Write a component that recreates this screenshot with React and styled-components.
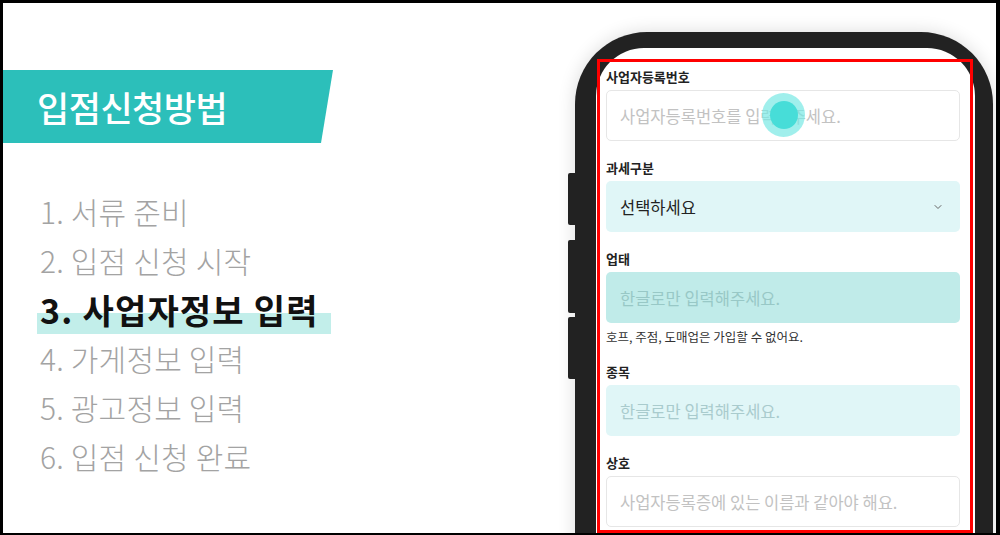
import styled, { createGlobalStyle } from "styled-components";
import { ChevronDown } from "lucide-react";

const GlobalStyle = createGlobalStyle`
  html, body {
    margin: 0;
    padding: 0;
    background: #fff;
  }
  body {
    font-family: "Noto Sans CJK KR", "Noto Sans", sans-serif;
  }
`;

const Frame = styled.div`
  box-sizing: border-box;
  width: 1000px;
  height: 535px;
  border-style: solid;
  border-color: #000;
  border-width: 3px 4px 2px 3px;
  background: #fff;
  overflow: hidden;
  display: flex;
`;

const Guide = styled.div`
  width: 572px;
  flex-shrink: 0;
  padding-top: 67px;
`;

const Banner = styled.div`
  width: 330px;
  height: 73px;
  background: #2cbfba;
  clip-path: polygon(0 0, 100% 0, calc(100% - 12px) 100%, 0 100%);
  display: flex;
  align-items: center;
  padding-left: 34px;
  box-sizing: border-box;
  color: #fff;
  font-size: 35px;
  font-weight: 500;
  letter-spacing: -0.5px;
`;

const Steps = styled.ol`
  list-style: none;
  margin: 44px 0 0;
  padding: 0 0 0 37px;
`;

const Step = styled.li`
  height: 49px;
  line-height: 49px;
  font-size: ${(p) => (p.$active ? "34px" : "30px")};
  font-weight: ${(p) => (p.$active ? 700 : 300)};
  color: ${(p) => (p.$active ? "#111" : "#a3a3a3")};
  letter-spacing: ${(p) => (p.$active ? "1.2px" : "0.2px")};
  white-space: nowrap;
`;

const Mark = styled.span`
  display: inline-block;
  margin-left: -3px;
  padding: 0 12px 0 3px;
  background: linear-gradient(transparent 58%, #c2eeea 58%);
`;

const Stage = styled.div`
  flex: 1;
  padding-top: 29px;
`;

const Phone = styled.div`
  position: relative;
  width: 418px;
  height: 600px;
  box-sizing: border-box;
  padding: 16px 18px 0 21px;
  background: #222;
  border-radius: 72px 72px 0 0;
  box-shadow: 0 0 18px rgba(0, 0, 0, 0.14);
`;

const SideKey = styled.span`
  position: absolute;
  left: -7px;
  top: ${(p) => p.$top}px;
  width: 8px;
  height: ${(p) => p.$h}px;
  background: #222;
  border-radius: 2px 0 0 2px;
`;

const Screen = styled.div`
  height: 100%;
  background: #fff;
  border-radius: 48px 48px 0 0;
  padding: 20px 15px 0 10px;
  box-sizing: border-box;
`;

const Highlight = styled.div`
  position: absolute;
  left: 22px;
  top: 27px;
  width: 376px;
  height: 474px;
  box-sizing: border-box;
  border: 3px solid #f00;
  pointer-events: none;
`;

const Field = styled.div`
  margin-bottom: 18px;
`;

const Label = styled.div`
  font-size: 13px;
  font-weight: 700;
  line-height: 18px;
  color: #222;
  margin-bottom: 4px;
`;

const Box = styled.div`
  position: relative;
  height: 51px;
  box-sizing: border-box;
  border-radius: 5px;
  border: 1px solid ${(p) => (p.$tone === "white" ? "#e6e6e6" : "transparent")};
  background: ${(p) =>
    p.$tone === "teal" ? "#c0ebe9" : p.$tone === "mint" ? "#e0f6f7" : "#fff"};
  display: flex;
  align-items: center;
  justify-content: space-between;
  padding: 0 15px 0 13px;
  font-size: 16.5px;
  color: ${(p) =>
    p.$value
      ? "#222"
      : p.$tone === "teal"
      ? "#98c8c6"
      : p.$tone === "mint"
      ? "#a9cbcd"
      : "#c2c2c2"};
  white-space: nowrap;
`;

const Hint = styled.div`
  margin-top: 6px;
  font-size: 12.5px;
  line-height: 16px;
  color: #333;
`;

const Touch = styled.span`
  position: absolute;
  left: 155px;
  top: 2px;
  width: 43px;
  height: 44px;
  border-radius: 50%;
  background: rgba(120, 232, 228, 0.7);
  display: flex;
  align-items: center;
  justify-content: center;

  &::after {
    content: "";
    width: 28px;
    height: 28px;
    border-radius: 50%;
    background: #47ddd8;
  }
`;

const steps = [
  "1. 서류 준비",
  "2. 입점 신청 시작",
  "3. 사업자정보 입력",
  "4. 가게정보 입력",
  "5. 광고정보 입력",
  "6. 입점 신청 완료",
];

export default function App() {
  return (
    <>
      <GlobalStyle />
      <Frame>
        <Guide>
          <Banner>입점신청방법</Banner>
          <Steps>
            {steps.map((s, i) =>
              i === 2 ? (
                <Step key={s} $active>
                  <Mark>{s}</Mark>
                </Step>
              ) : (
                <Step key={s}>{s}</Step>
              )
            )}
          </Steps>
        </Guide>
        <Stage>
          <Phone>
            <SideKey $top={141} $h={52} />
            <SideKey $top={208} $h={73} />
            <SideKey $top={285} $h={62} />
            <Screen>
              <Field>
                <Label>사업자등록번호</Label>
                <Box $tone="white">
                  사업자등록번호를 입력해주세요.
                  <Touch />
                </Box>
              </Field>
              <Field>
                <Label>과세구분</Label>
                <Box $tone="mint" $value>
                  선택하세요
                  <ChevronDown size={12} color="#666" strokeWidth={2} />
                </Box>
              </Field>
              <Field>
                <Label>업태</Label>
                <Box $tone="teal">한글로만 입력해주세요.</Box>
                <Hint>호프, 주점, 도매업은 가입할 수 없어요.</Hint>
              </Field>
              <Field>
                <Label>종목</Label>
                <Box $tone="mint">한글로만 입력해주세요.</Box>
              </Field>
              <Field>
                <Label>상호</Label>
                <Box $tone="white">사업자등록증에 있는 이름과 같아야 해요.</Box>
              </Field>
            </Screen>
            <Highlight />
          </Phone>
        </Stage>
      </Frame>
    </>
  );
}
